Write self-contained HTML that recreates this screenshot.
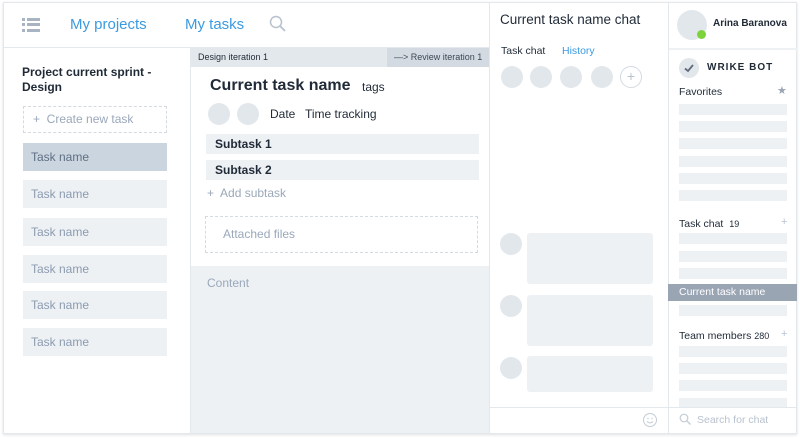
<!DOCTYPE html>
<html><head><meta charset="utf-8"><style>
*{margin:0;padding:0;box-sizing:border-box}
body{width:800px;height:438px;background:#fff;font-family:"Liberation Sans",sans-serif;position:relative;overflow:hidden;color:#1f2a36}
.a{position:absolute}
.t{position:absolute;white-space:nowrap}
.bar{position:absolute;left:679px;width:108px;height:11px;background:#edf1f4}
.task{position:absolute;left:23px;width:144px;height:28px;background:#edf1f4;color:#8c9bb0;font-size:12px;line-height:28px;padding-left:8px}
.circ{position:absolute;width:22px;height:22px;border-radius:50%;background:#e2e7ec}
</style></head><body>
<div class="a" style="left:3px;top:2px;width:794px;height:432px;border:1px solid #e3e8ed;box-shadow:0 1px 3px rgba(0,0,0,.12)"></div>
<div class="a" style="left:3px;top:47px;width:487px;height:1px;background:#e3e8ed"></div>
<div class="a" style="left:22px;top:18px;width:3px;height:3px;background:#a9b4c2"></div><div class="a" style="left:27px;top:18px;width:13px;height:3px;background:#a9b4c2"></div>
<div class="a" style="left:22px;top:23px;width:3px;height:3px;background:#a9b4c2"></div><div class="a" style="left:27px;top:23px;width:13px;height:3px;background:#a9b4c2"></div>
<div class="a" style="left:22px;top:29px;width:3px;height:3px;background:#a9b4c2"></div><div class="a" style="left:27px;top:29px;width:13px;height:3px;background:#a9b4c2"></div>
<div class="t" style="left:70px;top:16px;font-size:15px;color:#3c9ae0">My projects</div>
<div class="t" style="left:185px;top:16px;font-size:15px;color:#3c9ae0">My tasks</div>
<svg class="a" style="left:269px;top:15px" width="18" height="18"><circle cx="7" cy="7" r="5.5" fill="none" stroke="#b8c2ce" stroke-width="1.5"/><path d="M11 11l5 5" stroke="#b8c2ce" stroke-width="1.8"/></svg>
<div class="a" style="left:190px;top:48px;width:1px;height:386px;background:#e3e8ed"></div>
<div class="t" style="left:22px;top:65px;font-size:12px;font-weight:bold;line-height:15px;color:#1f2a36">Project current sprint -<br>Design</div>
<div class="a" style="left:23px;top:106px;width:144px;height:27px;border:1px dashed #d3dae2;color:#9aa8ba;font-size:12px;line-height:25px;padding-left:9px">+&nbsp; Create new task</div>
<div class="task" style="top:143px;background:#cbd5df;color:#5f6f84">Task name</div>
<div class="task" style="top:180px">Task name</div>
<div class="task" style="top:218px">Task name</div>
<div class="task" style="top:255px">Task name</div>
<div class="task" style="top:291px">Task name</div>
<div class="task" style="top:328px">Task name</div>
<div class="a" style="left:191px;top:48px;width:298px;height:19px;background:#e3e8ed"></div>
<div class="a" style="left:387px;top:48px;width:102px;height:19px;background:#d3dae2"></div>
<div class="t" style="left:198px;top:52px;font-size:9px;color:#1f2a36">Design iteration 1</div>
<div class="t" style="left:394px;top:52px;font-size:9px;color:#3d4856">—&gt; Review iteration 1</div>
<div class="t" style="left:210px;top:77px;font-size:16px;font-weight:bold;color:#1f2a36">Current task name</div>
<div class="t" style="left:362px;top:80px;font-size:12px">tags</div>
<div class="circ" style="left:208px;top:103px"></div><div class="circ" style="left:237px;top:103px"></div>
<div class="t" style="left:270px;top:107px;font-size:12px">Date</div>
<div class="t" style="left:305px;top:107px;font-size:12px">Time tracking</div>
<div class="a" style="left:206px;top:134px;width:273px;height:20px;background:#edf1f4;font-size:12px;font-weight:bold;line-height:20px;padding-left:9px">Subtask 1</div>
<div class="a" style="left:206px;top:160px;width:273px;height:20px;background:#edf1f4;font-size:12px;font-weight:bold;line-height:20px;padding-left:9px">Subtask 2</div>
<div class="t" style="left:207px;top:186px;font-size:12px;color:#9aa8ba">+&nbsp; Add subtask</div>
<div class="a" style="left:205px;top:216px;width:273px;height:37px;border:1px dashed #d3dae2;color:#9aa8ba;font-size:12px;line-height:35px;padding-left:17px">Attached files</div>
<div class="a" style="left:191px;top:266px;width:298px;height:167px;background:#edf1f4"></div>
<div class="t" style="left:207px;top:276px;font-size:12px;color:#9aa8ba">Content</div>
<div class="a" style="left:489px;top:3px;width:1px;height:430px;background:#e3e8ed"></div>
<div class="t" style="left:500px;top:12px;font-size:13.5px;color:#1f2a36">Current task name chat</div>
<div class="t" style="left:501px;top:45px;font-size:10.5px">Task chat</div>
<div class="t" style="left:562px;top:45px;font-size:10.5px;color:#3c9ae0">History</div>
<div class="circ" style="left:501px;top:66px"></div><div class="circ" style="left:530px;top:66px"></div><div class="circ" style="left:560px;top:66px"></div><div class="circ" style="left:591px;top:66px"></div>
<div class="a" style="left:620px;top:66px;width:22px;height:22px;border-radius:50%;border:1px solid #d3dae2;color:#b8c2ce;text-align:center;line-height:19px;font-size:14px">+</div>
<div class="circ" style="left:500px;top:233px"></div><div class="a" style="left:527px;top:233px;width:126px;height:51px;background:#edf1f4;border-radius:3px"></div>
<div class="circ" style="left:500px;top:295px"></div><div class="a" style="left:527px;top:295px;width:126px;height:51px;background:#edf1f4;border-radius:3px"></div>
<div class="circ" style="left:500px;top:357px"></div><div class="a" style="left:527px;top:356px;width:126px;height:36px;background:#edf1f4;border-radius:3px"></div>
<div class="a" style="left:490px;top:407px;width:307px;height:1px;background:#e3e8ed"></div>
<svg class="a" style="left:642px;top:412px" width="16" height="16"><circle cx="8" cy="8" r="6.5" fill="none" stroke="#c3ccd6"/><circle cx="6" cy="6.5" r=".7" fill="#c3ccd6"/><circle cx="10" cy="6.5" r=".7" fill="#c3ccd6"/><path d="M5 9.5q3 3 6 0" fill="none" stroke="#c3ccd6"/></svg>
<div class="a" style="left:668px;top:3px;width:1px;height:430px;background:#e3e8ed"></div>
<div class="a" style="left:669px;top:48px;width:128px;height:2px;background:#edf1f4"></div>
<div class="a" style="left:677px;top:10px;width:30px;height:30px;border-radius:50%;background:#e2e7ec"></div>
<div class="a" style="left:697px;top:30px;width:9px;height:9px;border-radius:50%;background:#7fd33a"></div>
<div class="t" style="left:713px;top:18px;font-size:10px;font-weight:bold">Arina Baranova</div>
<div class="a" style="left:679px;top:58px;width:20px;height:20px;border-radius:50%;background:#e2e7ec"></div>
<svg class="a" style="left:679px;top:58px" width="20" height="20"><path d="M6 10.5l3 2.5 5-6" fill="none" stroke="#5f6b7a" stroke-width="1.8"/></svg>
<div class="t" style="left:707px;top:62px;font-size:10px;font-weight:bold;letter-spacing:1px">WRIKE BOT</div>
<div class="t" style="left:679px;top:86px;font-size:10.5px">Favorites</div>
<div class="t" style="left:777px;top:84px;font-size:11px;color:#9aa5b4">★</div>
<div class="bar" style="top:104px"></div><div class="bar" style="top:121px"></div><div class="bar" style="top:138px"></div><div class="bar" style="top:156px"></div><div class="bar" style="top:173px"></div><div class="bar" style="top:190px"></div>
<div class="t" style="left:679px;top:218px;font-size:10.5px">Task chat&nbsp; <span style="font-size:9px">19</span></div>
<div class="t" style="left:781px;top:216px;font-size:11px;color:#b8c2ce">+</div>
<div class="bar" style="top:233px"></div><div class="bar" style="top:251px"></div><div class="bar" style="top:268px"></div>
<div class="a" style="left:668px;top:284px;width:129px;height:17px;background:#9aa5b4;color:#fff;font-size:10.5px;line-height:17px;padding-left:11px">Current task name</div>
<div class="bar" style="top:305px"></div>
<div class="t" style="left:679px;top:330px;font-size:10.5px">Team members <span style="font-size:9px">280</span></div>
<div class="t" style="left:781px;top:328px;font-size:11px;color:#b8c2ce">+</div>
<div class="bar" style="top:346px"></div><div class="bar" style="top:363px"></div><div class="bar" style="top:380px"></div><div class="bar" style="top:398px;height:9px"></div>
<svg class="a" style="left:679px;top:413px" width="12" height="12"><circle cx="5" cy="5" r="3.8" fill="none" stroke="#c3ccd6" stroke-width="1.2"/><path d="M8 8l3.5 3.5" stroke="#c3ccd6" stroke-width="1.3"/></svg>
<div class="t" style="left:697px;top:414px;font-size:10.5px;color:#b8c2ce">Search for chat</div>
</body></html>
